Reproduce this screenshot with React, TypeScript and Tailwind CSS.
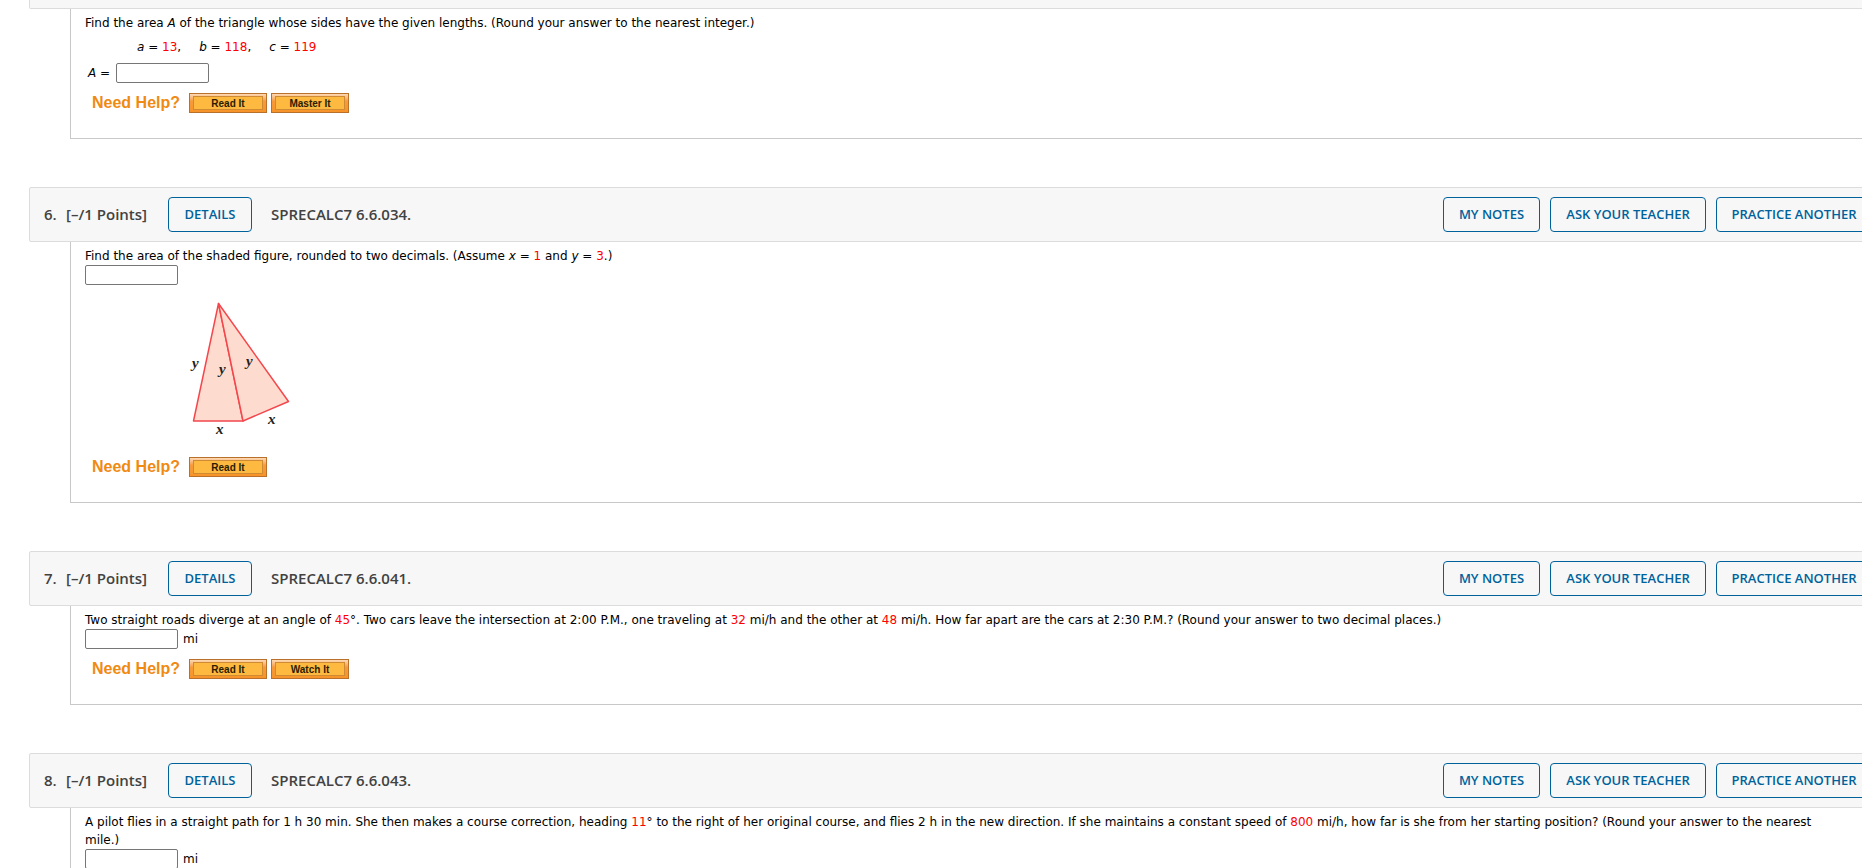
import type { ReactNode } from "react";

function Red({ children }: { children: ReactNode }) {
  return <span className="text-[#ff0000]">{children}</span>;
}

function OutlineButton({ children, className = "" }: { children: ReactNode; className?: string }) {
  return (
    <button
      type="button"
      className={`h-[35px] shrink-0 cursor-pointer rounded-[4px] border border-[#00629b] pb-px text-center text-[13px] leading-[18px] font-semibold whitespace-nowrap text-[#00629b] ${className}`}
    >
      {children}
    </button>
  );
}

function AnswerBox({ label }: { label: string }) {
  return (
    <input
      type="text"
      aria-label={label}
      className="h-[20px] w-[93px] rounded-[2px] border border-[#767676] bg-white px-1 text-[13px] text-black"
    />
  );
}

function NeedHelp({ options }: { options: string[] }) {
  return (
    <div className="flex items-center gap-1 pl-[7px]">
      <span className="w-[93px] font-['Liberation_Sans',Arial,sans-serif] text-[16px] leading-[20px] font-bold text-[#f08a12]">
        Need Help?
      </span>
      {options.map((option) => (
        <button
          key={option}
          type="button"
          className="flex h-[20px] w-[78px] cursor-pointer border border-[#b8702a] bg-linear-to-b from-[#fcd9b4] via-[#f79a3a] via-40% to-[#f79428] px-[3px] py-[2px]"
        >
          <span className="flex h-full w-full items-center justify-center border border-[#cf8a34] bg-[#fdb940] pt-px font-['Liberation_Sans',Arial,sans-serif] text-[10px] leading-[12px] font-bold text-[#2b1c00]">
            {option}
          </span>
        </button>
      ))}
    </div>
  );
}

function QuestionHeader({ number, code }: { number: number; code: string }) {
  return (
    <header className="flex h-[55px] items-center rounded-[2px] border border-[#dcdcdc] bg-[#f7f7f7] pr-4 pl-[14px] font-['Open_Sans',sans-serif] text-[#424242]">
      <h2 className="flex items-center pb-[2px] text-[15px] leading-[20px] font-semibold">
        <span className="w-[22px]">{number}.</span>
        <span className="w-[102px]">[–/1 Points]</span>
      </h2>
      <OutlineButton className="w-[84px]">DETAILS</OutlineButton>
      <span className="ml-[19px] pb-[2px] text-[15px] leading-[20px] font-semibold">{code}</span>
      <div className="ml-auto flex gap-[10px]">
        <OutlineButton className="w-[97px]">MY NOTES</OutlineButton>
        <OutlineButton className="w-[156px]">ASK YOUR TEACHER</OutlineButton>
        <OutlineButton className="w-[156px]">PRACTICE ANOTHER</OutlineButton>
      </div>
    </header>
  );
}

function QuestionBody({ children }: { children: ReactNode }) {
  return (
    <div className="ml-[41px] border-b border-l border-[#c8c8c8] pt-[5px] pr-12 pb-[25px] pl-[14px]">{children}</div>
  );
}

function TriangleFigure() {
  return (
    <svg
      width="120"
      height="150"
      viewBox="0 0 120 150"
      className="ml-[95px] block"
      role="img"
      aria-label="Two adjoining triangles with sides x and y"
    >
      <g fill="#fddccf" stroke="#f4474d" strokeWidth="1.5" strokeLinejoin="round">
        <path d="M38.5 7.500 L13.5 125 H63 Z" />
        <path d="M38.5 7.500 L63 125 L108.5 105.500 Z" />
      </g>
      <g fill="#231f20" fontFamily="Liberation Serif, serif" fontStyle="italic" fontWeight="bold" fontSize="15">
        <text x="12" y="72">y</text>
        <text x="39" y="78">y</text>
        <text x="66" y="70">y</text>
        <text x="36" y="138">x</text>
        <text x="88" y="128">x</text>
      </g>
    </svg>
  );
}

export default function App() {
  return (
    <div className="overflow-hidden bg-white">
      <main className="-mr-[27px] ml-[29px] flex flex-col gap-12 font-['DejaVu_Sans',Verdana,sans-serif] text-[12px] leading-[18px] text-black">
        <section>
          <div className="h-[9px] rounded-b-[2px] border border-t-0 border-[#dcdcdc] bg-[#f7f7f7]" />
          <QuestionBody>
            <p>
              Find the area <i>A</i> of the triangle whose sides have the given lengths. (Round your answer to the
              nearest integer.)
            </p>
            <p className="mt-[6px] flex gap-[18px] pl-[52px]">
              <span>
                <i>a</i> = <Red>13</Red>,
              </span>
              <span>
                <i>b</i> = <Red>118</Red>,
              </span>
              <span>
                <i>c</i> = <Red>119</Red>
              </span>
            </p>
            <div className="mt-[7px] mb-[10px] flex items-center gap-[6px] pl-[3px]">
              <span>
                <i>A</i> =
              </span>
              <AnswerBox label="Area A" />
            </div>
            <NeedHelp options={["Read It", "Master It"]} />
          </QuestionBody>
        </section>

        <section>
          <QuestionHeader number={6} code="SPRECALC7 6.6.034." />
          <QuestionBody>
            <p>
              Find the area of the shaded figure, rounded to two decimals. (Assume <i>x</i> = <Red>1</Red> and{" "}
              <i>y</i> = <Red>3</Red>.)
            </p>
            <div className="mb-[11px] flex">
              <AnswerBox label="Area of the shaded figure" />
            </div>
            <TriangleFigure />
            <div className="mt-[11px]">
              <NeedHelp options={["Read It"]} />
            </div>
          </QuestionBody>
        </section>

        <section>
          <QuestionHeader number={7} code="SPRECALC7 6.6.041." />
          <QuestionBody>
            <p>
              Two straight roads diverge at an angle of <Red>45</Red>°. Two cars leave the intersection at 2:00 P.M.,
              one traveling at <Red>32</Red> mi/h and the other at <Red>48</Red> mi/h. How far apart are the cars at
              2:30 P.M.? (Round your answer to two decimal places.)
            </p>
            <div className="mb-[10px] flex items-center gap-[5px]">
              <AnswerBox label="Distance in miles" />
              <span>mi</span>
            </div>
            <NeedHelp options={["Read It", "Watch It"]} />
          </QuestionBody>
        </section>

        <section>
          <QuestionHeader number={8} code="SPRECALC7 6.6.043." />
          <QuestionBody>
            <p>
              A pilot flies in a straight path for 1 h 30 min. She then makes a course correction, heading{" "}
              <Red>11</Red>° to the right of her original course, and flies 2 h in the new direction. If she maintains
              a constant speed of <Red>800</Red> mi/h, how far is she from her starting position? (Round your answer
              to the nearest mile.)
            </p>
            <div className="flex items-center gap-[5px]">
              <AnswerBox label="Distance from start in miles" />
              <span>mi</span>
            </div>
          </QuestionBody>
        </section>
      </main>
    </div>
  );
}
